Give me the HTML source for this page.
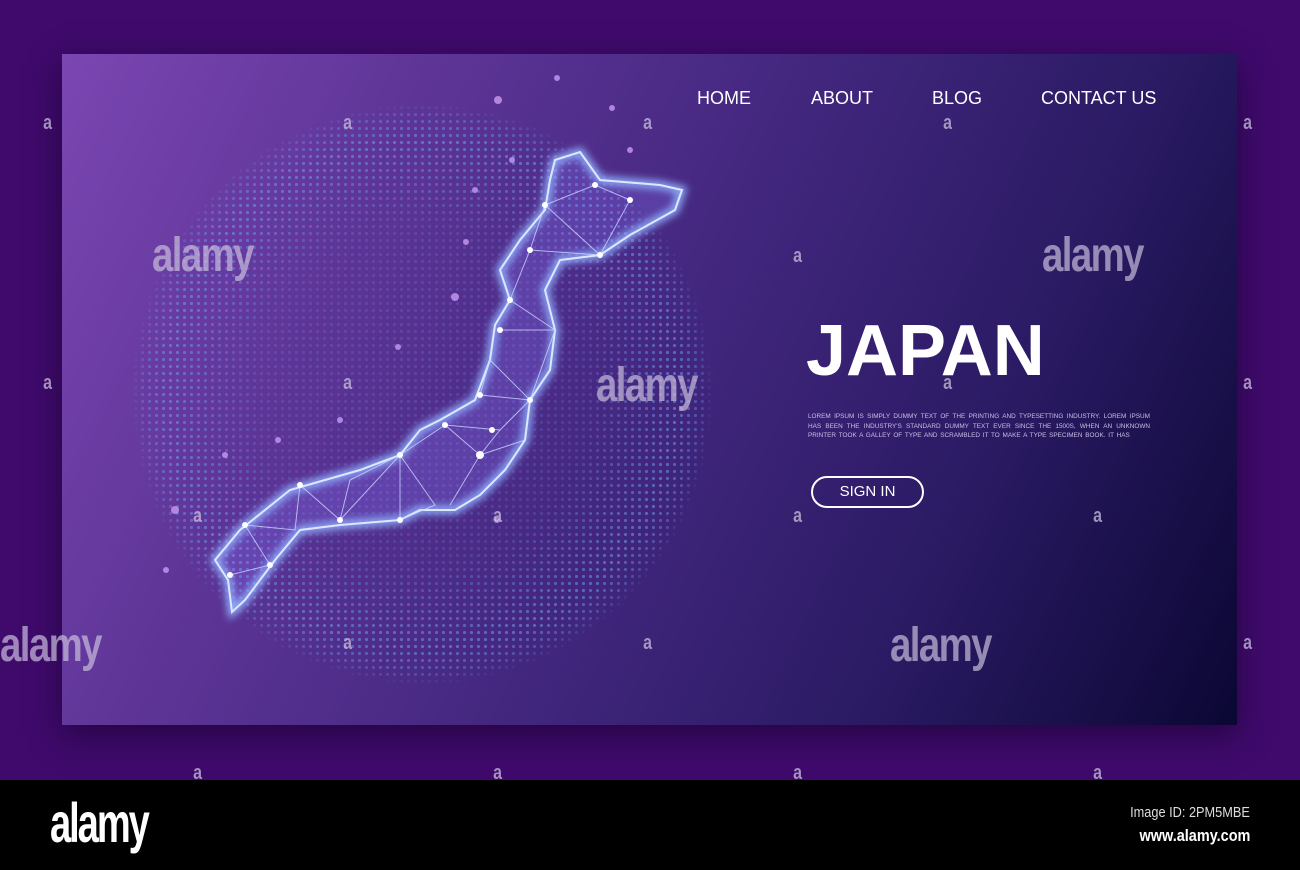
<!DOCTYPE html>
<html><head><meta charset="utf-8"><style>
*{margin:0;padding:0;box-sizing:border-box}
body{width:1300px;height:870px;overflow:hidden;background:#3f0a6c;font-family:"Liberation Sans",sans-serif;position:relative}
.panel{position:absolute;left:62px;top:54px;width:1175px;height:671px;background:linear-gradient(115deg,#7b46b2 0%,#5e3597 25%,#43277f 50%,#2a1a63 75%,#0b0734 100%);box-shadow:0 10px 30px rgba(20,0,40,.6);overflow:hidden}
.globe{position:absolute;left:70px;top:50px;width:580px;height:580px;border-radius:50%;background-image:radial-gradient(circle,rgba(110,150,240,.8) 1.4px,transparent 1.8px);background-size:7px 7px;-webkit-mask:radial-gradient(circle,rgba(0,0,0,.35) 40%,#000 62%,rgba(0,0,0,.6) 68%,transparent 71%);opacity:.75}
nav a{position:absolute;top:88px;color:#fff;font-size:18px;text-decoration:none}
h1{position:absolute;left:806px;top:310px;color:#fff;font-size:72px;font-weight:bold;letter-spacing:0px}
.lorem{position:absolute;left:808px;top:412px;width:342px;color:#cbbde6;font-size:6.4px;line-height:9.5px;text-align:justify;word-spacing:1px}
.btn{position:absolute;left:811px;top:476px;width:113px;height:32px;border:2px solid #fff;border-radius:16px;color:#fff;font-size:15px;text-align:center;line-height:28px}
.wm{position:absolute;color:rgba(200,190,220,.7);font-size:48px;font-weight:bold;transform:scaleX(.8);transform-origin:left;letter-spacing:-2px}
.wa{position:absolute;color:rgba(200,190,220,.75);font-size:20px;font-weight:bold;transform:scaleX(.8)}
.bar{position:absolute;left:0;top:780px;width:1300px;height:90px;background:#000}
</style></head><body>
<div class="panel"><div class="globe"></div></div>
<svg style="position:absolute;left:0;top:0" width="1300" height="870">
<defs><filter id="g"><feGaussianBlur stdDeviation="4"/></filter></defs>
<g fill="#d9a8ff" opacity=".7">
<circle cx="498" cy="100" r="4"/><circle cx="557" cy="78" r="3"/><circle cx="612" cy="108" r="3"/><circle cx="512" cy="160" r="3"/><circle cx="466" cy="242" r="3"/><circle cx="455" cy="297" r="4"/><circle cx="398" cy="347" r="3"/><circle cx="340" cy="420" r="3"/><circle cx="278" cy="440" r="3"/><circle cx="225" cy="455" r="3"/><circle cx="175" cy="510" r="4"/><circle cx="166" cy="570" r="3"/><circle cx="497" cy="520" r="3"/><circle cx="630" cy="150" r="3"/><circle cx="475" cy="190" r="3"/></g>
<path d="M555 160L580 152L600 180L660 185L682 190L675 210L630 235L600 255L560 260L545 290L555 330L550 370L530 400L525 440L505 470L480 495L455 510L420 510L400 520L340 525L300 530L275 560L245 600L232 612L228 580L215 560L240 530L290 490L360 470L400 455L420 430L440 420L475 400L490 360L495 325L510 300L500 270L520 240L545 210L550 180Z" fill="rgba(140,120,255,.25)" stroke="#8fb0ff" stroke-width="8" filter="url(#g)"/>
<path d="M555 160L580 152L600 180L660 185L682 190L675 210L630 235L600 255L560 260L545 290L555 330L550 370L530 400L525 440L505 470L480 495L455 510L420 510L400 520L340 525L300 530L275 560L245 600L232 612L228 580L215 560L240 530L290 490L360 470L400 455L420 430L440 420L475 400L490 360L495 325L510 300L500 270L520 240L545 210L550 180Z" fill="none" stroke="#dfe6ff" stroke-width="2"/>
<g stroke="#c9d4ff" stroke-width="1" fill="none" opacity=".8">
<path d="M545 205L595 185L630 200L600 255L545 205L530 250L600 255M530 250L510 300L555 330L500 330L555 330L530 400L490 360L480 395L530 400L500 430L480 455L525 440M480 455L445 425L500 430M480 455L450 505M445 425L400 455L435 505L400 520L400 455L350 480L340 520L300 485M340 520L400 455M300 485L295 530L245 525L270 565L230 575"/></g>
<g fill="#fff"><circle cx="545" cy="205" r="3"/><circle cx="595" cy="185" r="3"/><circle cx="630" cy="200" r="3"/><circle cx="600" cy="255" r="3"/><circle cx="530" cy="250" r="3"/><circle cx="510" cy="300" r="3"/><circle cx="500" cy="330" r="3"/><circle cx="530" cy="400" r="3"/><circle cx="480" cy="395" r="3"/><circle cx="480" cy="455" r="4"/><circle cx="445" cy="425" r="3"/><circle cx="400" cy="455" r="3"/><circle cx="400" cy="520" r="3"/><circle cx="340" cy="520" r="3"/><circle cx="300" cy="485" r="3"/><circle cx="245" cy="525" r="3"/><circle cx="270" cy="565" r="3"/><circle cx="230" cy="575" r="3"/><circle cx="492" cy="430" r="3"/></g>
</svg>
<nav><a style="left:697px">HOME</a><a style="left:811px">ABOUT</a><a style="left:932px">BLOG</a><a style="left:1041px">CONTACT US</a></nav>
<h1>JAPAN</h1>
<div class="lorem">LOREM IPSUM IS SIMPLY DUMMY TEXT OF THE PRINTING AND TYPESETTING INDUSTRY. LOREM IPSUM HAS BEEN THE INDUSTRY'S STANDARD DUMMY TEXT EVER SINCE THE 1500S, WHEN AN UNKNOWN PRINTER TOOK A GALLEY OF TYPE AND SCRAMBLED IT TO MAKE A TYPE SPECIMEN BOOK. IT HAS</div>
<div class="btn">SIGN IN</div>
<div class="wm" style="left:152px;top:228px">alamy</div>
<div class="wm" style="left:1042px;top:228px">alamy</div>
<div class="wm" style="left:596px;top:358px">alamy</div>
<div class="wm" style="left:0px;top:618px">alamy</div>
<div class="wm" style="left:890px;top:618px">alamy</div>
<div class="wa" style="left:42px;top:112px">a</div><div class="wa" style="left:342px;top:112px">a</div><div class="wa" style="left:642px;top:112px">a</div><div class="wa" style="left:942px;top:112px">a</div><div class="wa" style="left:1242px;top:112px">a</div>
<div class="wa" style="left:792px;top:245px">a</div>
<div class="wa" style="left:42px;top:372px">a</div><div class="wa" style="left:342px;top:372px">a</div><div class="wa" style="left:942px;top:372px">a</div><div class="wa" style="left:1242px;top:372px">a</div>
<div class="wa" style="left:192px;top:505px">a</div><div class="wa" style="left:492px;top:505px">a</div><div class="wa" style="left:792px;top:505px">a</div><div class="wa" style="left:1092px;top:505px">a</div>
<div class="wa" style="left:342px;top:632px">a</div><div class="wa" style="left:642px;top:632px">a</div><div class="wa" style="left:1242px;top:632px">a</div>
<div class="wa" style="left:192px;top:762px">a</div><div class="wa" style="left:492px;top:762px">a</div><div class="wa" style="left:792px;top:762px">a</div><div class="wa" style="left:1092px;top:762px">a</div>
<div class="bar">
<div style="position:absolute;left:50px;top:10px;color:#fff;font-size:56px;font-weight:bold;transform:scaleX(.68);transform-origin:left;letter-spacing:-3px">alamy</div>
<div style="position:absolute;right:50px;top:24px;color:#ddd;font-size:15px;transform:scaleX(.85);transform-origin:right">Image ID: 2PM5MBE</div>
<div style="position:absolute;right:50px;top:46px;color:#fff;font-size:17px;font-weight:bold;transform:scaleX(.85);transform-origin:right">www.alamy.com</div>
</div>
</body></html>
